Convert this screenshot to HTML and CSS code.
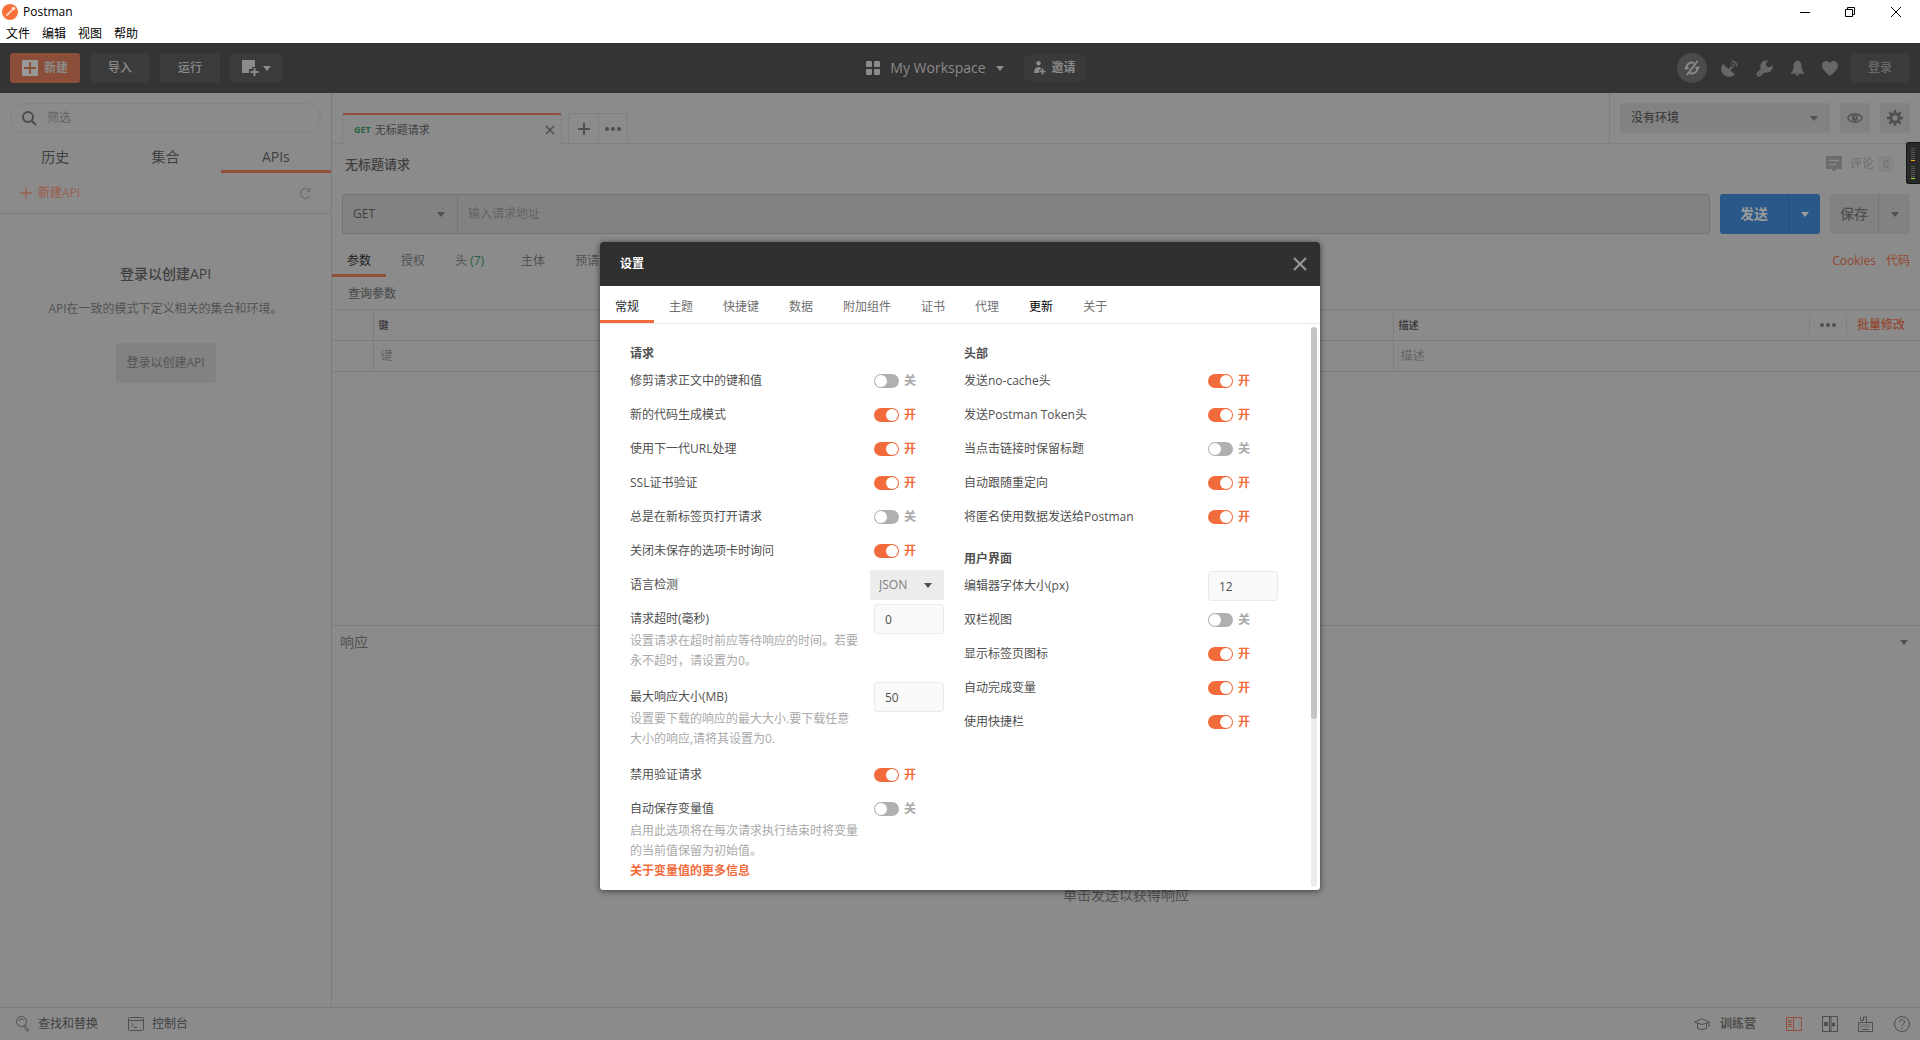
FILE: index.html
```html
<!DOCTYPE html>
<html lang="zh-CN">
<head>
  <meta charset="UTF-8">
  <meta name="viewport" content="width=device-width, initial-scale=1.0">
  <title>Postman</title>
  <link rel="stylesheet" href="styles.css">
</head>
<body>
  <!-- Window frame -->
  <header class="window">
    <div class="titlebar">
      <svg class="logo" width="16" height="16" viewBox="0 0 16 16"><circle cx="8" cy="8" r="8" fill="#f9703a"/><path d="M3.500 12.500l1.200-2.400 5-4.800 1.200 1.200-4.700 4.800z" fill="#ffd9c9"/><circle cx="11.500" cy="4.500" r="1.700" fill="#ffe9df"/></svg>
      <span class="app-name">Postman</span>
      <div class="window-buttons">
        <button aria-label="最小化"><svg width="12" height="12" viewBox="0 0 12 12"><path d="M1 6.500h10" stroke="#000" fill="none"/></svg></button>
        <button aria-label="还原"><svg width="12" height="12" viewBox="0 0 12 12"><path d="M1.500 3.500h7v7h-7zM3.500 3.500v-2h7v7h-2" stroke="#000" fill="none"/></svg></button>
        <button aria-label="关闭"><svg width="12" height="12" viewBox="0 0 12 12"><path d="M1 1l10 10M11 1L1 11" stroke="#000" fill="none"/></svg></button>
      </div>
    </div>
    <nav class="menubar">
      <a href="#">文件</a><a href="#">编辑</a><a href="#">视图</a><a href="#">帮助</a>
    </nav>
  </header>

  <div class="app">
    <!-- Top toolbar -->
    <div class="toolbar">
      <div class="toolbar-left">
        <button class="tool-btn primary"><svg width="16" height="16" viewBox="0 0 16 16"><rect width="16" height="16" rx="1" fill="#999"/><path d="M8 2v12M2 8h12" stroke="#8a4e39" stroke-width="2"/></svg>新建</button>
        <button class="tool-btn">导入</button>
        <button class="tool-btn">运行</button>
        <button class="tool-btn window-btn" aria-label="新窗口"><svg width="17" height="16" viewBox="0 0 17 16"><path d="M0 0h13v7h-3v2H7v4H0z" fill="#8b8b8b"/><path d="M12.500 8v8M8.500 12h8" stroke="#8b8b8b" stroke-width="2"/></svg><i class="caret"></i></button>
      </div>
      <div class="toolbar-center">
        <button class="workspace"><svg width="14" height="14" viewBox="0 0 14 14" fill="#8b8b8b"><rect width="6" height="6" rx="1"/><rect x="8" width="6" height="6" rx="1"/><rect y="8" width="6" height="6" rx="1"/><rect x="8" y="8" width="6" height="6" rx="1"/></svg>My Workspace<i class="caret"></i></button>
        <button class="invite"><svg width="12" height="14" viewBox="0 0 12 14" fill="#8b8b8b"><circle cx="4.500" cy="2.300" r="2.200"/><path d="M0 12c0-4 1.500-6 4.500-6 1.200 0 1.800.3 2.300.8V9H5v3z"/><path d="M8.500 7.500v6M5.500 10.500h6" stroke="#8b8b8b" stroke-width="1.700"/></svg>邀请</button>
      </div>
      <div class="toolbar-right">
        <button class="sync" aria-label="同步"><svg width="16" height="16" viewBox="0 0 16 16" fill="none" stroke="#898989" stroke-width="2"><path d="M2.500 9A5.500 5.500 0 0 1 10 3M13.500 7A5.500 5.500 0 0 1 6 13M13.500 1L3 15"/><path d="M0 9.500l2.500-4 3 3.500zM16 6.500l-2.500 4-3-3.500z" fill="#898989" stroke="none"/></svg></button>
        <button aria-label="拦截器"><svg width="17" height="17" viewBox="0 0 17 17"><path d="M2 4l12 10.500c-3 3-8 3.200-11.300 0C-.6 11.500-.3 7 2 4z" fill="#676767"/><path d="M8 10l3.500-3.500" stroke="#676767" stroke-width="2" fill="none"/><path d="M10.500 3.500a3.500 3.500 0 0 1 3 3M10.500.8a6 6 0 0 1 5.500 5.500" stroke="#676767" stroke-width="1.200" fill="none"/></svg></button>
        <button aria-label="工具"><svg width="17" height="17" viewBox="0 0 17 17"><path d="M8 9.500L3 14" stroke="#676767" stroke-width="5" stroke-linecap="round"/><circle cx="10.500" cy="6.500" r="6.200" fill="#676767"/><path d="M10 5.500L12 7h2.500L17 4.500V0h-4l-3 3z" fill="#343434"/><circle cx="3" cy="14" r="1" fill="#505050"/></svg></button>
        <button aria-label="通知"><svg width="13" height="16" viewBox="0 0 13 16"><path d="M6.500 0l1 1c2.500.6 3 3 3 5 0 3 .6 5 2.500 7v.7H0V13c1.900-2 2.500-4 2.500-7 0-2 .5-4.400 3-5zM5 14h3c0 2.500-3 2.500-3 0z" fill="#676767"/></svg></button>
        <button aria-label="收藏"><svg width="16" height="15" viewBox="0 0 16 15"><path d="M8 15C4 11.500 0 8 0 4.500 0 0 5-1.500 8 2c3-3.500 8-2 8 2.500C16 8 12 11.500 8 15z" fill="#676767"/></svg></button>
        <button class="tool-btn login">登录</button>
      </div>
    </div>

    <div class="workspace-area">
      <!-- Sidebar -->
      <aside class="sidebar">
        <div class="search">
          <svg width="15" height="15" viewBox="0 0 15 15" fill="none" stroke="#4c4c4c" stroke-width="2"><circle cx="6" cy="6" r="5"/><path d="M9.700 9.700L14 14"/></svg>
          <input type="text" placeholder="筛选" aria-label="筛选">
        </div>
        <nav class="side-tabs">
          <a href="#">历史</a><a href="#">集合</a><a href="#" class="active">APIs</a>
        </nav>
        <div class="new-api">
          <button><svg width="12" height="12" viewBox="0 0 12 12"><path d="M6 0v12M0 6h12" stroke="#9b6251" stroke-width="1.500"/></svg>新建API</button>
          <button aria-label="刷新"><svg width="12" height="13" viewBox="0 0 12 13" fill="none" stroke="#737373" stroke-width="1.500"><path d="M10 2.800A5 5 0 1 0 10.500 9.500"/><path d="M11.500 0v5H7z" fill="#737373" stroke="none"/></svg></button>
        </div>
        <div class="side-empty">
          <h2>登录以创建API</h2>
          <p>API在一致的模式下定义相关的集合和环境。</p>
          <button>登录以创建API</button>
        </div>
      </aside>

      <!-- Request builder -->
      <main class="main">
        <div class="tabbar">
          <div class="request-tab">
            <span class="method">GET</span>
            <span class="tab-name">无标题请求</span>
            <button aria-label="关闭标签页"><svg width="10" height="10" viewBox="0 0 10 10"><path d="M1 1l8 8M9 1L1 9" stroke="#4e4e4e" stroke-width="1.500"/></svg></button>
          </div>
          <div class="tab-actions">
            <button aria-label="新标签页"><svg width="12" height="12" viewBox="0 0 12 12"><path d="M6 0v12M0 6h12" stroke="#4e4e4e" stroke-width="2"/></svg></button>
            <button aria-label="更多"><svg width="16" height="4" viewBox="0 0 16 4" fill="#4e4e4e"><circle cx="2" cy="2" r="2"/><circle cx="8" cy="2" r="2"/><circle cx="14" cy="2" r="2"/></svg></button>
          </div>
          <div class="environment">
            <div class="select-wrap env-select">
              <select aria-label="环境"><option>没有环境</option></select>
            </div>
            <button class="square-btn" aria-label="查看环境"><svg width="16" height="10" viewBox="0 0 16 10"><path d="M.7 5C3.500-.4 12.500-.4 15.300 5 12.500 10.400 3.500 10.400.7 5z" fill="none" stroke="#505050" stroke-width="1.400"/><circle cx="8" cy="5" r="3" fill="#505050"/><path d="M8 3v2h1.500" stroke="#8b8b8b" fill="none"/></svg></button>
            <button class="square-btn" aria-label="设置"><svg width="16" height="16" viewBox="0 0 16 16"><circle cx="8" cy="8" r="4.200" fill="none" stroke="#505050" stroke-width="3"/><path d="M8 0v3M8 13v3M0 8h3M13 8h3M2.300 2.300l2.200 2.200M11.500 11.500l2.200 2.200M2.300 13.700l2.200-2.200M11.500 4.500l2.200-2.200" stroke="#505050" stroke-width="2.500"/></svg></button>
          </div>
        </div>

        <div class="request-title">
          <h1>无标题请求</h1>
          <button class="comments"><svg width="16" height="16" viewBox="0 0 16 16"><path d="M0 0h16v13h-5.500L8 15.500 5.500 13H0z" fill="#6d6d6d"/><path d="M3 4.500h10M3 8.500h7" stroke="#8b8b8b" stroke-width="1.500"/></svg>评论<span>0</span></button>
        </div>

        <div class="url-row">
          <div class="url-box">
            <div class="select-wrap method-select">
              <select aria-label="请求方法"><option>GET</option></select>
            </div>
            <input type="text" placeholder="输入请求地址" aria-label="请求地址">
          </div>
          <div class="split send">
            <button>发送</button><button aria-label="发送选项"><i class="caret"></i></button>
          </div>
          <div class="split save">
            <button>保存</button><button aria-label="保存选项"><i class="caret"></i></button>
          </div>
        </div>

        <div class="request-tabs">
          <nav>
            <a href="#" class="active">参数</a><a href="#">授权</a><a href="#" class="headers-tab">头 <span>(7)</span></a><a href="#">主体</a><a href="#">预请求脚本</a><a href="#">测试</a>
          </nav>
          <div class="request-links"><a href="#">Cookies</a><a href="#">代码</a></div>
        </div>

        <div class="params-title">查询参数</div>
        <table class="params">
          <thead>
            <tr>
              <th class="check-col"></th>
              <th>键</th>
              <th>值</th>
              <th class="desc-col">
                <div class="desc-head">
                  <span>描述</span>
                  <button class="dots" aria-label="列选项"><svg width="16" height="4" viewBox="0 0 16 4" fill="#4e4e4e"><circle cx="2" cy="2" r="2"/><circle cx="8" cy="2" r="2"/><circle cx="14" cy="2" r="2"/></svg></button>
                  <button class="bulk">批量修改</button>
                </div>
              </th>
            </tr>
          </thead>
          <tbody>
            <tr><td></td><td>键</td><td>值</td><td>描述</td></tr>
          </tbody>
        </table>

        <section class="response">
          <div class="response-head"><span>响应</span><i class="caret"></i></div>
          <p>单击发送以获得响应</p>
        </section>
      </main>
    </div>

    <!-- Status bar -->
    <footer class="statusbar">
      <div class="status-group">
        <button class="find"><svg width="14" height="16" viewBox="0 0 14 16" fill="none" stroke="#4f4f4f"><circle cx="5.500" cy="5.500" r="5"/><path d="M3 4.500Q5 2 7.500 3.500M7.500 10l3.500 5.200 2-1.400L9 9"/></svg>查找和替换</button>
        <button><svg width="16" height="14" viewBox="0 0 16 14" fill="none" stroke="#4f4f4f"><rect x=".5" y=".5" width="15" height="13" rx="1"/><path d="M1 3.500h14M3.500 6l2 2-2 2M6 10.500h3"/></svg>控制台</button>
      </div>
      <div class="status-group right">
        <button class="bootcamp"><svg width="16" height="12" viewBox="0 0 16 12" fill="none" stroke="#4f4f4f"><path d="M.5 4L8 .8 15.500 4 8 6.500zM3.500 5v5.500Q8 12.500 12.500 10.500V5M15 4v5"/></svg>训练营</button>
        <button aria-label="边栏"><svg width="16" height="14" viewBox="0 0 16 14" fill="none" stroke="#934b34"><path d="M.5.500h15v13H.5zM7.500 1v12M2 3.500h4M2 5.500h4M2 7.500h4M2 9.500h4"/></svg></button>
        <button aria-label="双栏"><svg width="16" height="16" viewBox="0 0 16 16" fill="none" stroke="#4f4f4f"><path d="M.5.500h15v15H.5zM7.500 1v14M9 1v14"/><path d="M2.500 6.500h3v3h-3zM10.500 7h2v3h-2z" fill="#4f4f4f"/></svg></button>
        <button aria-label="快捷键"><svg width="16" height="16" viewBox="0 0 16 16" fill="none" stroke="#4f4f4f"><path d="M.5 6.500h14v9H.5zM2.500 1v3.500h3V1h3v5"/><path d="M2.500 9h10M2.500 11h10" stroke-dasharray="1 1"/><path d="M4 13.500h7"/></svg></button>
        <button aria-label="帮助"><svg width="16" height="16" viewBox="0 0 16 16" fill="none" stroke="#4f4f4f"><circle cx="8" cy="8" r="7.500"/><path d="M5.500 6.500c0-4 5-3.500 5-.5 0 2-2.500 1.800-2.500 4.200M8 11.500v1.500"/></svg></button>
      </div>
    </footer>

    <!-- Level meter docked on the window edge -->
    <div class="meter">
      <div class="meter-bars"></div>
      <div class="meter-bars low"></div>
    </div>

    <!-- Settings dialog -->
    <div class="modal-layer">
      <div class="modal" role="dialog" aria-label="设置">
        <div class="modal-head">
          <h2>设置</h2>
          <button aria-label="关闭"><svg width="14" height="14" viewBox="0 0 14 14"><path d="M1 1l12 12M13 1L1 13" stroke="#9a9a9a" stroke-width="2"/></svg></button>
        </div>
        <nav class="modal-tabs">
          <a href="#" class="active">常规</a><a href="#">主题</a><a href="#">快捷键</a><a href="#">数据</a><a href="#">附加组件</a><a href="#">证书</a><a href="#">代理</a><a href="#" class="notice">更新</a><a href="#">关于</a>
        </nav>
        <div class="modal-body">
          <div class="settings-col">
            <h3>请求</h3>
            <div class="setting"><label for="s-trim">修剪请求正文中的键和值</label><div class="control"><input type="checkbox" id="s-trim"><span></span></div></div>
            <div class="setting"><label for="s-codegen">新的代码生成模式</label><div class="control"><input type="checkbox" id="s-codegen" checked><span></span></div></div>
            <div class="setting"><label for="s-url">使用下一代URL处理</label><div class="control"><input type="checkbox" id="s-url" checked><span></span></div></div>
            <div class="setting"><label for="s-ssl">SSL证书验证</label><div class="control"><input type="checkbox" id="s-ssl" checked><span></span></div></div>
            <div class="setting"><label for="s-newtab">总是在新标签页打开请求</label><div class="control"><input type="checkbox" id="s-newtab"><span></span></div></div>
            <div class="setting"><label for="s-ask">关闭未保存的选项卡时询问</label><div class="control"><input type="checkbox" id="s-ask" checked><span></span></div></div>
            <div class="setting"><label for="s-lang">语言检测</label><div class="control end"><div class="select-wrap lang-select"><select id="s-lang"><option>JSON</option></select></div></div></div>
            <div class="setting">
              <div><label for="s-timeout">请求超时(毫秒)</label><p>设置请求在超时前应等待响应的时间。若要永不超时，请设置为0。</p></div>
              <div class="control"><input type="text" id="s-timeout" value="0"></div>
            </div>
            <div class="setting">
              <div><label for="s-size">最大响应大小(MB)</label><p>设置要下载的响应的最大大小.要下载任意大小的响应,请将其设置为0.</p></div>
              <div class="control"><input type="text" id="s-size" value="50"></div>
            </div>
            <div class="setting"><label for="s-verify">禁用验证请求</label><div class="control"><input type="checkbox" id="s-verify" checked><span></span></div></div>
            <div class="setting">
              <div><label for="s-persist">自动保存变量值</label><p>启用此选项将在每次请求执行结束时将变量的当前值保留为初始值。<a href="#">关于变量值的更多信息</a></p></div>
              <div class="control"><input type="checkbox" id="s-persist"><span></span></div>
            </div>
          </div>
          <div class="settings-col">
            <h3>头部</h3>
            <div class="setting"><label for="s-nocache">发送no-cache头</label><div class="control"><input type="checkbox" id="s-nocache" checked><span></span></div></div>
            <div class="setting"><label for="s-token">发送Postman Token头</label><div class="control"><input type="checkbox" id="s-token" checked><span></span></div></div>
            <div class="setting"><label for="s-retain">当点击链接时保留标题</label><div class="control"><input type="checkbox" id="s-retain"><span></span></div></div>
            <div class="setting"><label for="s-redirect">自动跟随重定向</label><div class="control"><input type="checkbox" id="s-redirect" checked><span></span></div></div>
            <div class="setting"><label for="s-usage">将匿名使用数据发送给Postman</label><div class="control"><input type="checkbox" id="s-usage" checked><span></span></div></div>
            <h3 class="next">用户界面</h3>
            <div class="setting"><label for="s-font">编辑器字体大小(px)</label><div class="control"><input type="text" id="s-font" value="12"></div></div>
            <div class="setting"><label for="s-twopane">双栏视图</label><div class="control"><input type="checkbox" id="s-twopane"><span></span></div></div>
            <div class="setting"><label for="s-icons">显示标签页图标</label><div class="control"><input type="checkbox" id="s-icons" checked><span></span></div></div>
            <div class="setting"><label for="s-auto">自动完成变量</label><div class="control"><input type="checkbox" id="s-auto" checked><span></span></div></div>
            <div class="setting"><label for="s-launch">使用快捷栏</label><div class="control"><input type="checkbox" id="s-launch" checked><span></span></div></div>
          </div>
          <div class="scrollbar"><div class="thumb"></div></div>
        </div>
      </div>
    </div>
  </div>
</body>
</html>
```
FILE: styles.css
```css
* {
  box-sizing: border-box;
}

body {
  margin: 0;
  min-height: 100vh;
  display: flex;
  flex-direction: column;
  font-family: "Open Sans", "Noto Sans CJK SC", sans-serif;
  font-size: 12px;
  line-height: 20px;
  color: #3f3f3f;
  background: #8b8b8b;
}

h1, h2, h3, p {
  margin: 0;
}

a {
  color: inherit;
  text-decoration: none;
}

button, input, select {
  font: inherit;
  color: inherit;
  background: none;
  border: 0;
  padding: 0;
  margin: 0;
}

button {
  display: flex;
  align-items: center;
  justify-content: center;
  cursor: pointer;
}

svg {
  display: block;
  flex: none;
}

.caret {
  border: 4px solid transparent;
  border-top: 5px solid;
  border-bottom: 0;
}

.select-wrap {
  position: relative;
}

.select-wrap select {
  width: 100%;
  height: 100%;
  appearance: none;
}

.select-wrap::after {
  content: "";
  position: absolute;
  right: 12px;
  top: 50%;
  margin-top: -2px;
  border: 4px solid transparent;
  border-top: 5px solid #505050;
  border-bottom: 0;
  pointer-events: none;
}

/* Window frame */
.window {
  background: #fff;
  color: #000;
  height: 43px;
}

.titlebar {
  display: flex;
  align-items: center;
  height: 24px;
  padding-left: 2px;
  gap: 5px;
}

.window-buttons {
  display: flex;
  margin-left: auto;
}

.window-buttons button {
  width: 45px;
  height: 20px;
}

.window-buttons button:last-child {
  width: 48px;
}

.menubar {
  display: flex;
  gap: 12px;
  height: 19px;
  padding-left: 6px;
}

/* Toolbar */
.app {
  position: relative;
  flex: 1;
  display: flex;
  flex-direction: column;
}

.toolbar {
  display: grid;
  grid-template-columns: 1fr auto 1fr;
  align-items: center;
  height: 50px;
  padding: 0 10px;
  background: #343434;
  color: #8b8b8b;
}

.toolbar-left, .toolbar-center, .toolbar-right {
  display: flex;
  align-items: center;
}

.toolbar-left {
  gap: 10px;
}

.tool-btn {
  width: 60px;
  height: 30px;
  border-radius: 3px;
  background: #3b3b3b;
  font-weight: 500;
}

.tool-btn.primary {
  width: 70px;
  gap: 6px;
  background: #8a4e39;
  font-weight: 700;
}

.tool-btn.window-btn {
  width: 52px;
  gap: 4px;
}

.toolbar-center {
  gap: 20px;
  padding-left: 32px;
}

.workspace {
  gap: 10px;
  font-size: 14px;
}

.invite {
  gap: 6px;
  width: 62px;
  height: 26px;
  border-radius: 3px;
  background: #3a3a3a;
  font-weight: 700;
}

.toolbar-right {
  justify-content: flex-end;
  gap: 18px;
}

.toolbar-right .sync {
  width: 30px;
  height: 30px;
  margin-right: -4px;
  border-radius: 50%;
  background: #4b4b4b;
}

.toolbar-right .login {
  margin-left: -6px;
  color: #6b6b6b;
}

/* Sidebar */
.workspace-area {
  flex: 1;
  display: flex;
}

.sidebar {
  width: 332px;
  border-right: 1px solid #7d7d7d;
}

.search {
  display: flex;
  align-items: center;
  gap: 10px;
  height: 30px;
  margin: 10px;
  padding: 0 11px;
  border: 1px solid #828282;
  border-radius: 15px;
}

.search input {
  flex: 1;
  min-width: 0;
}

input::placeholder {
  color: #646464;
  opacity: 1;
}

.side-tabs {
  display: flex;
  font-size: 14px;
}

.side-tabs a {
  flex: 1;
  height: 30px;
  padding-top: 4px;
  text-align: center;
  border-bottom: 3px solid transparent;
}

.side-tabs .active {
  border-color: #8f4f3a;
}

.new-api {
  display: flex;
  align-items: center;
  justify-content: space-between;
  height: 41px;
  padding: 0 20px;
  border-bottom: 1px solid #7d7d7d;
  color: #9b6251;
  font-weight: 500;
}

.new-api button {
  gap: 6px;
}

.side-empty {
  display: flex;
  flex-direction: column;
  align-items: center;
  padding-top: 50px;
  text-align: center;
}

.side-empty h2 {
  font-size: 14px;
  font-weight: 500;
}

.side-empty p {
  margin: 15px 0 24px;
  color: #535353;
}

.side-empty button {
  width: 100px;
  height: 40px;
  border-radius: 3px;
  background: #828282;
  color: #535353;
}

/* Tabs and environment */
.main {
  flex: 1;
  min-width: 0;
  display: flex;
  flex-direction: column;
}

.tabbar {
  display: flex;
  align-items: flex-end;
  height: 51px;
  padding-left: 10px;
  border-bottom: 1px solid #808080;
}

.request-tab {
  display: flex;
  align-items: center;
  gap: 4px;
  width: 220px;
  height: 31px;
  margin-bottom: -1px;
  padding: 0 6px 0 11px;
  border: 1px solid #808080;
  border-top: 2px solid #8f4f3a;
  border-bottom: 0;
  border-radius: 3px 3px 0 0;
  background: #8b8b8b;
}

.tab-name {
  font-size: 11px;
}

.method {
  color: #27633f;
  font-size: 9px;
  font-weight: 700;
}

.request-tab button {
  margin-left: auto;
}

.tab-actions {
  display: flex;
  height: 30px;
  margin-left: 6px;
  border: 1px solid #808080;
  border-bottom: 0;
  border-radius: 3px 3px 0 0;
}

.tab-actions button {
  width: 28px;
}

.tab-actions button:first-child {
  width: 30px;
  border-right: 1px solid #808080;
}

.environment {
  display: flex;
  align-items: center;
  gap: 10px;
  height: 50px;
  margin-left: auto;
  padding: 0 10px;
  border-left: 1px solid #7d7d7d;
}

.env-select {
  width: 210px;
  height: 30px;
  border-radius: 3px;
  background: #828282;
  font-weight: 500;
}

.env-select select {
  padding-left: 11px;
}

.square-btn {
  width: 30px;
  height: 30px;
  border-radius: 3px;
  background: #828282;
}

/* Request */
.request-title {
  display: flex;
  align-items: center;
  justify-content: space-between;
  height: 40px;
  padding: 0 26px 0 13px;
}

.request-title h1 {
  font-size: 13px;
  font-weight: 500;
}

.comments {
  gap: 8px;
  color: #6d6d6d;
}

.comments span {
  width: 16px;
  height: 16px;
  margin-left: -4px;
  border-radius: 3px;
  background: #858585;
  font-size: 10px;
  line-height: 16px;
}

.url-row {
  display: flex;
  gap: 10px;
  padding: 10px 10px 0;
}

.url-box {
  flex: 1;
  display: flex;
  height: 40px;
  border: 1px solid #747474;
  border-radius: 3px;
  background: #828282;
}

.method-select {
  width: 115px;
  border-right: 1px solid #747474;
}

.method-select select {
  padding-left: 10px;
}

.url-box input {
  flex: 1;
  padding: 0 10px;
}

.split {
  display: flex;
  height: 40px;
  border-radius: 3px;
  font-size: 14px;
}

.split button:last-child {
  width: 31px;
}

.send {
  width: 100px;
  background: #2a5888;
  color: #9b9b9b;
  font-weight: 700;
}

.save {
  width: 80px;
  background: #828282;
  color: #505050;
  font-weight: 500;
}

.split button:first-child {
  flex: 1;
  border-right: 1px solid #747474;
}

.send button:first-child {
  border-color: #244c77;
}

.request-tabs {
  display: flex;
  justify-content: space-between;
  height: 43px;
  padding-right: 10px;
  align-items: flex-end;
}

.request-tabs nav {
  display: flex;
}

.request-tabs nav a {
  height: 36px;
  padding: 10px 15px 0;
  border-bottom: 3px solid transparent;
  color: #515151;
}

.request-tabs nav .headers-tab {
  width: 66px;
  padding-right: 0;
}

.headers-tab span {
  color: #27633f;
}

.request-tabs nav .active {
  border-color: #8f4f3a;
  color: #222;
}

.request-links {
  display: flex;
  gap: 10px;
  height: 26px;
  color: #93482f;
}

.params-title {
  height: 32px;
  padding: 7px 16px 0;
  font-weight: 500;
  color: #505050;
}

.params {
  width: 100%;
  table-layout: fixed;
  border-collapse: collapse;
}

.params th, .params td {
  height: 31px;
  padding: 0 7px;
  border: 1px solid #7e7e7e;
  border-left: 0;
  text-align: left;
}

.params th {
  padding: 0 5px;
  font-size: 10px;
  font-weight: 700;
}

.params td {
  color: #646464;
}

.params .check-col {
  width: 41px;
}

.params .desc-col {
  width: 527px;
}

.params tr > :last-child {
  border-right: 0;
}

.desc-head {
  display: flex;
  align-items: center;
}

.desc-head .dots {
  width: 38px;
  height: 20px;
  margin-left: auto;
  border: solid #7e7e7e;
  border-width: 0 1px;
}

.bulk {
  padding: 0 10px;
  font-size: 12px;
  font-weight: 500;
  color: #93482f;
}

.response {
  flex: 0 0 382px;
  margin-top: auto;
  border-top: 1px solid #7b7b7b;
  color: #505050;
}

.response-head {
  display: flex;
  align-items: center;
  justify-content: space-between;
  padding: 6px 12px 0 8px;
  font-size: 14px;
}

.response p {
  padding-top: 233px;
  text-align: center;
  font-size: 14px;
}

/* Status bar */
.statusbar {
  display: flex;
  align-items: center;
  justify-content: space-between;
  height: 33px;
  padding: 0 10px 0 16px;
  border-top: 1px solid #7b7b7b;
  color: #3f3f3f;
}

.status-group {
  display: flex;
  gap: 30px;
}

.status-group button {
  gap: 8px;
}

.status-group.right {
  gap: 20px;
}

.status-group .bootcamp {
  gap: 10px;
  margin-right: 10px;
  font-weight: 700;
  color: #4f4f4f;
}

.meter {
  position: absolute;
  right: 0;
  top: 99px;
  width: 14px;
  height: 42px;
  padding: 5px 5px 5px 4px;
  border: 1px solid #141414;
  border-right: 0;
  border-radius: 3px 0 0 3px;
  background: #292929;
}

.meter-bars {
  height: 13px;
  margin-bottom: 5px;
  border-bottom: 1px solid #ffa21f;
  background: repeating-linear-gradient(#555 0 1px, #292929 1px 2px);
}

.meter-bars.low {
  border-color: #8fee20;
}

/* Settings dialog */
.modal-layer {
  position: absolute;
  inset: 0;
  display: flex;
  align-items: flex-start;
  justify-content: center;
  padding-top: 199px;
}

.modal {
  width: 720px;
  border-radius: 3px;
  background: #fff;
  color: #505050;
  box-shadow: 0 1px 6px rgba(0, 0, 0, 0.6);
}

.modal-head {
  display: flex;
  align-items: center;
  justify-content: space-between;
  height: 44px;
  padding: 0 13px 0 20px;
  border-radius: 3px 3px 0 0;
  background: #303030;
  color: #fff;
}

.modal-head h2 {
  font-size: 12px;
  font-weight: 700;
}

.modal-tabs {
  display: flex;
  border-bottom: 1px solid #eaeaea;
}

.modal-tabs a {
  height: 37px;
  padding: 11px 15px 0;
  border-bottom: 3px solid transparent;
  color: #707070;
}

.modal-tabs .active {
  border-color: #f26b3a;
  color: #282828;
}

.modal-tabs .notice {
  color: #000;
}

.modal-body {
  position: relative;
  display: flex;
  gap: 20px;
  padding: 20px 30px 9px;
}

.settings-col {
  width: 314px;
}

.settings-col h3 {
  font-size: 12px;
  font-weight: 700;
}

.settings-col .next {
  margin-top: 15px;
}

.setting {
  display: grid;
  grid-template-columns: 244px 70px;
}

.setting label {
  display: block;
  padding: 7px 0;
}

.setting p {
  width: 230px;
  margin: -5px 0 9px;
  color: #a9a9a9;
}

.setting p a {
  display: block;
  color: #f26b3a;
  font-weight: 700;
}

.settings-col:first-child .setting:last-child p {
  margin-bottom: 0;
}

.control {
  display: flex;
  align-items: center;
  gap: 5px;
  height: 34px;
}

.control.end {
  justify-content: flex-end;
}

.control input[type="checkbox"] {
  appearance: none;
  width: 25px;
  height: 14px;
  padding: 1px;
  border-radius: 7px;
  background: #b0b0b0;
}

.control input[type="checkbox"]::before {
  content: "";
  display: block;
  width: 12px;
  height: 12px;
  border-radius: 50%;
  background: #fff;
}

.control input[type="checkbox"]:checked {
  background: #f26b3a;
}

.control input[type="checkbox"]:checked::before {
  margin-left: auto;
}

.control span {
  color: #a9a9a9;
  font-weight: 700;
}

.control span::before {
  content: "关";
}

.control :checked + span {
  color: #f26b3a;
}

.control :checked + span::before {
  content: "开";
}

.control input[type="text"] {
  width: 70px;
  height: 30px;
  padding: 0 10px;
  border: 1px solid #eaeaea;
  border-radius: 3px;
  background: #fafafa;
}

.lang-select {
  flex: none;
  width: 74px;
  height: 30px;
  background: #ececec;
  color: #808080;
}

.lang-select select {
  padding-left: 9px;
}

.scrollbar {
  position: absolute;
  right: 3px;
  top: 3px;
  bottom: 3px;
  width: 6px;
  border-radius: 3px;
  background: #ececec;
}

.thumb {
  height: 70%;
  border-radius: 3px;
  background: #c4c4c4;
}
```
